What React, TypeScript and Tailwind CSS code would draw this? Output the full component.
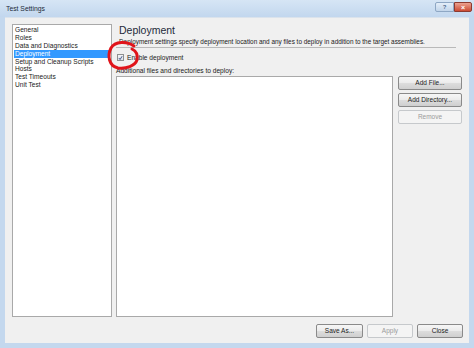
import React from "react";

const FONT = { fontFamily: '"Liberation Sans", Arial, sans-serif' };

const categories = [
  "General",
  "Roles",
  "Data and Diagnostics",
  "Deployment",
  "Setup and Cleanup Scripts",
  "Hosts",
  "Test Timeouts",
  "Unit Test",
];

function WinButton({
  label,
  disabled = false,
  className = "",
}: {
  label: string;
  disabled?: boolean;
  className?: string;
}) {
  return (
    <div
      className={
        "flex items-center justify-center rounded-[2px] border text-[6.5px] " +
        (disabled
          ? "border-[#c6c9cc] bg-[#f4f4f4] text-[#9a9a9a] "
          : "border-[#8a8a8a] bg-[linear-gradient(to_bottom,#f6f6f6_0%,#ebebeb_50%,#dddddd_51%,#cfcfcf_100%)] text-[#1a1a1a] ") +
        className
      }
    >
      {label}
    </div>
  );
}

export default function App() {
  return (
    <div
      className="relative w-[474px] h-[348px] overflow-hidden bg-[#c4d8ee] flex flex-col"
      style={FONT}
    >
      {/* Title bar */}
      <div className="h-[17px] flex items-start justify-between pl-[6px] pr-[2px] bg-[linear-gradient(to_bottom,#d6e5f5,#c2d7ee)]">
        <span className="mt-[4px] text-[6.8px] text-[#1e2a3a]">Test Settings</span>
        <div className="flex mt-[2px] gap-0">
          <div className="w-[19px] h-[10px] rounded-l-[2px] border border-[#8ea7c4] bg-[linear-gradient(to_bottom,#e4eef9,#c2d5ea)] flex items-center justify-center text-[6px] font-bold text-[#4d6a8e]">
            ?
          </div>
          <div className="w-[18px] h-[10px] rounded-r-[2px] border border-[#8c3a30] bg-[linear-gradient(to_bottom,#eba190,#cc4a33)] flex items-center justify-center text-[7px] font-bold text-white leading-none">
            ×
          </div>
        </div>
      </div>

      {/* Client area */}
      <div className="mx-[5px] mb-[5px] flex-1 bg-[#f0f0f0] border-t border-[#dbe3ec] flex flex-col px-[7px] pt-[6px] pb-[5px]">
        <div className="flex gap-[4px] h-[293px]">
          {/* Category list */}
          <div className="w-[102px] h-[293px] border border-[#a9a9a9] bg-white pt-[1px] px-[1px]">
            {categories.map((c) => (
              <div
                key={c}
                className={
                  "h-[7.9px] leading-[7.9px] pl-[1px] text-[6.6px] " +
                  (c === "Deployment" ? "bg-[#3399ff] text-white" : "text-[#1a1a1a]")
                }
              >
                {c}
              </div>
            ))}
          </div>

          {/* Deployment page */}
          <div className="flex-1 flex flex-col">
            <div className="pl-[3px] text-[10.5px] leading-[13px] text-[#1e2a3a]">Deployment</div>
            <div className="pl-[3px] mt-[1px] text-[6.4px] leading-[7px] text-[#1a1a1a] whitespace-nowrap">
              Deployment settings specify deployment location and any files to deploy in addition to the
              target assemblies.
            </div>
            <div className="mt-[2px] h-px bg-[#b9b9b9] mr-[6px]" />
            <div className="mt-[5px] flex items-center gap-[3px] pl-[1px]">
              <div className="w-[7px] h-[7px] border border-[#8e8f8f] bg-[linear-gradient(to_bottom,#f2f4f7,#dde3ea)] flex items-center justify-center">
                <svg width="6" height="6" viewBox="0 0 6 6">
                  <path d="M1 3 L2.5 4.8 L5 0.8" stroke="#2a3f7a" strokeWidth="1" fill="none" />
                </svg>
              </div>
              <span className="text-[6.6px] text-[#1a1a1a]">Enable deployment</span>
            </div>
            <div className="mt-[4px] text-[6.6px] leading-[8px] text-[#1a1a1a]">
              Additional files and directories to deploy:
            </div>
            <div className="mt-[1px] flex-1 flex gap-[5px]">
              <div className="w-[277px] border border-[#a9a9a9] bg-white" />
              <div className="flex flex-col gap-[3px]">
                <WinButton label="Add File..." className="w-[64px] h-[14px]" />
                <WinButton label="Add Directory..." className="w-[64px] h-[14px]" />
                <WinButton label="Remove" disabled className="w-[64px] h-[14px]" />
              </div>
            </div>
          </div>
        </div>

        {/* Dialog buttons */}
        <div className="mt-[7px] flex justify-end gap-[4px] -mr-[1px]">
          <WinButton label="Save As..." className="w-[47px] h-[14px]" />
          <WinButton label="Apply" disabled className="w-[46px] h-[14px]" />
          <WinButton label="Close" className="w-[46px] h-[14px]" />
        </div>
      </div>

      {/* Red hand-drawn annotation */}
      <svg
        className="absolute left-0 top-0 pointer-events-none"
        width="474"
        height="348"
        viewBox="0 0 474 348"
      >
        <path
          d="M134 46 C127 41 115 41 111 48 C107 56 109 66 118 68 C126 69 135 66 137 60 C138 55 136 51 132 49"
          stroke="#e0141b"
          strokeWidth="3"
          fill="none"
          strokeLinecap="round"
        />
      </svg>
    </div>
  );
}
